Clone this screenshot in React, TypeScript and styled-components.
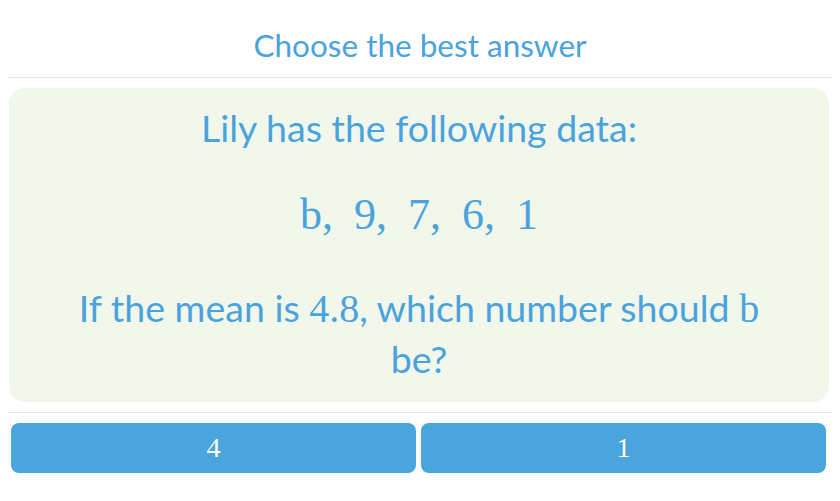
import React from 'react';
import styled, { createGlobalStyle } from 'styled-components';

const GlobalStyle = createGlobalStyle`
  body {
    margin: 0;
    background: #ffffff;
    font-family: 'Lato', 'Open Sans', sans-serif;
  }
`;

const Page = styled.div`
  padding: 0 8px;
  display: flex;
  flex-direction: column;
`;

const Title = styled.h1`
  margin: 0;
  height: 77px;
  display: flex;
  align-items: center;
  justify-content: center;
  padding-top: 12px;
  box-sizing: border-box;
  font-size: 31.5px;
  font-weight: 400;
  color: #4aa3dc;
`;

const Divider = styled.hr`
  margin: 0;
  border: none;
  border-top: 1px solid #e2e6e6;
`;

const Card = styled.div`
  margin: 10px 3px 10px 1px;
  background: #f2f7ec;
  border-radius: 16px;
  padding: 15px 52px 18px;
  display: flex;
  flex-direction: column;
  align-items: center;
  text-align: center;
  color: #4aa3dc;
`;

const Para = styled.p`
  margin: 0;
  font-size: 37.5px;
  line-height: 50px;
`;

const MathLine = styled.div`
  margin: 36px 0 42px;
  font-family: 'Liberation Serif', serif;
  font-size: 44px;
  line-height: 52px;
  word-spacing: 10px;
`;

const Math = styled.span`
  font-family: 'Liberation Serif', serif;
  font-size: 40px;
`;

const Answers = styled.div`
  display: grid;
  grid-template-columns: 1fr 1fr;
  gap: 5px;
  padding: 10px 6px 0 3px;
`;

const AnswerButton = styled.button`
  height: 50px;
  border: none;
  border-radius: 8px;
  background: #49a5dc;
  color: #ffffff;
  font-family: 'Liberation Serif', serif;
  font-size: 28px;
  cursor: pointer;
`;

export default function App() {
  const answers = ['4', '1'];
  return (
    <>
      <GlobalStyle />
      <Page>
        <Title>Choose the best answer</Title>
        <Divider />
        <Card>
          <Para>Lily has the following data:</Para>
          <MathLine>b,  9,  7,  6,  1</MathLine>
          <Para>
            If the mean is <Math>4.8</Math>, which number should <Math>b</Math> be?
          </Para>
        </Card>
        <Divider />
        <Answers>
          {answers.map((a) => (
            <AnswerButton key={a}>{a}</AnswerButton>
          ))}
        </Answers>
      </Page>
    </>
  );
}
